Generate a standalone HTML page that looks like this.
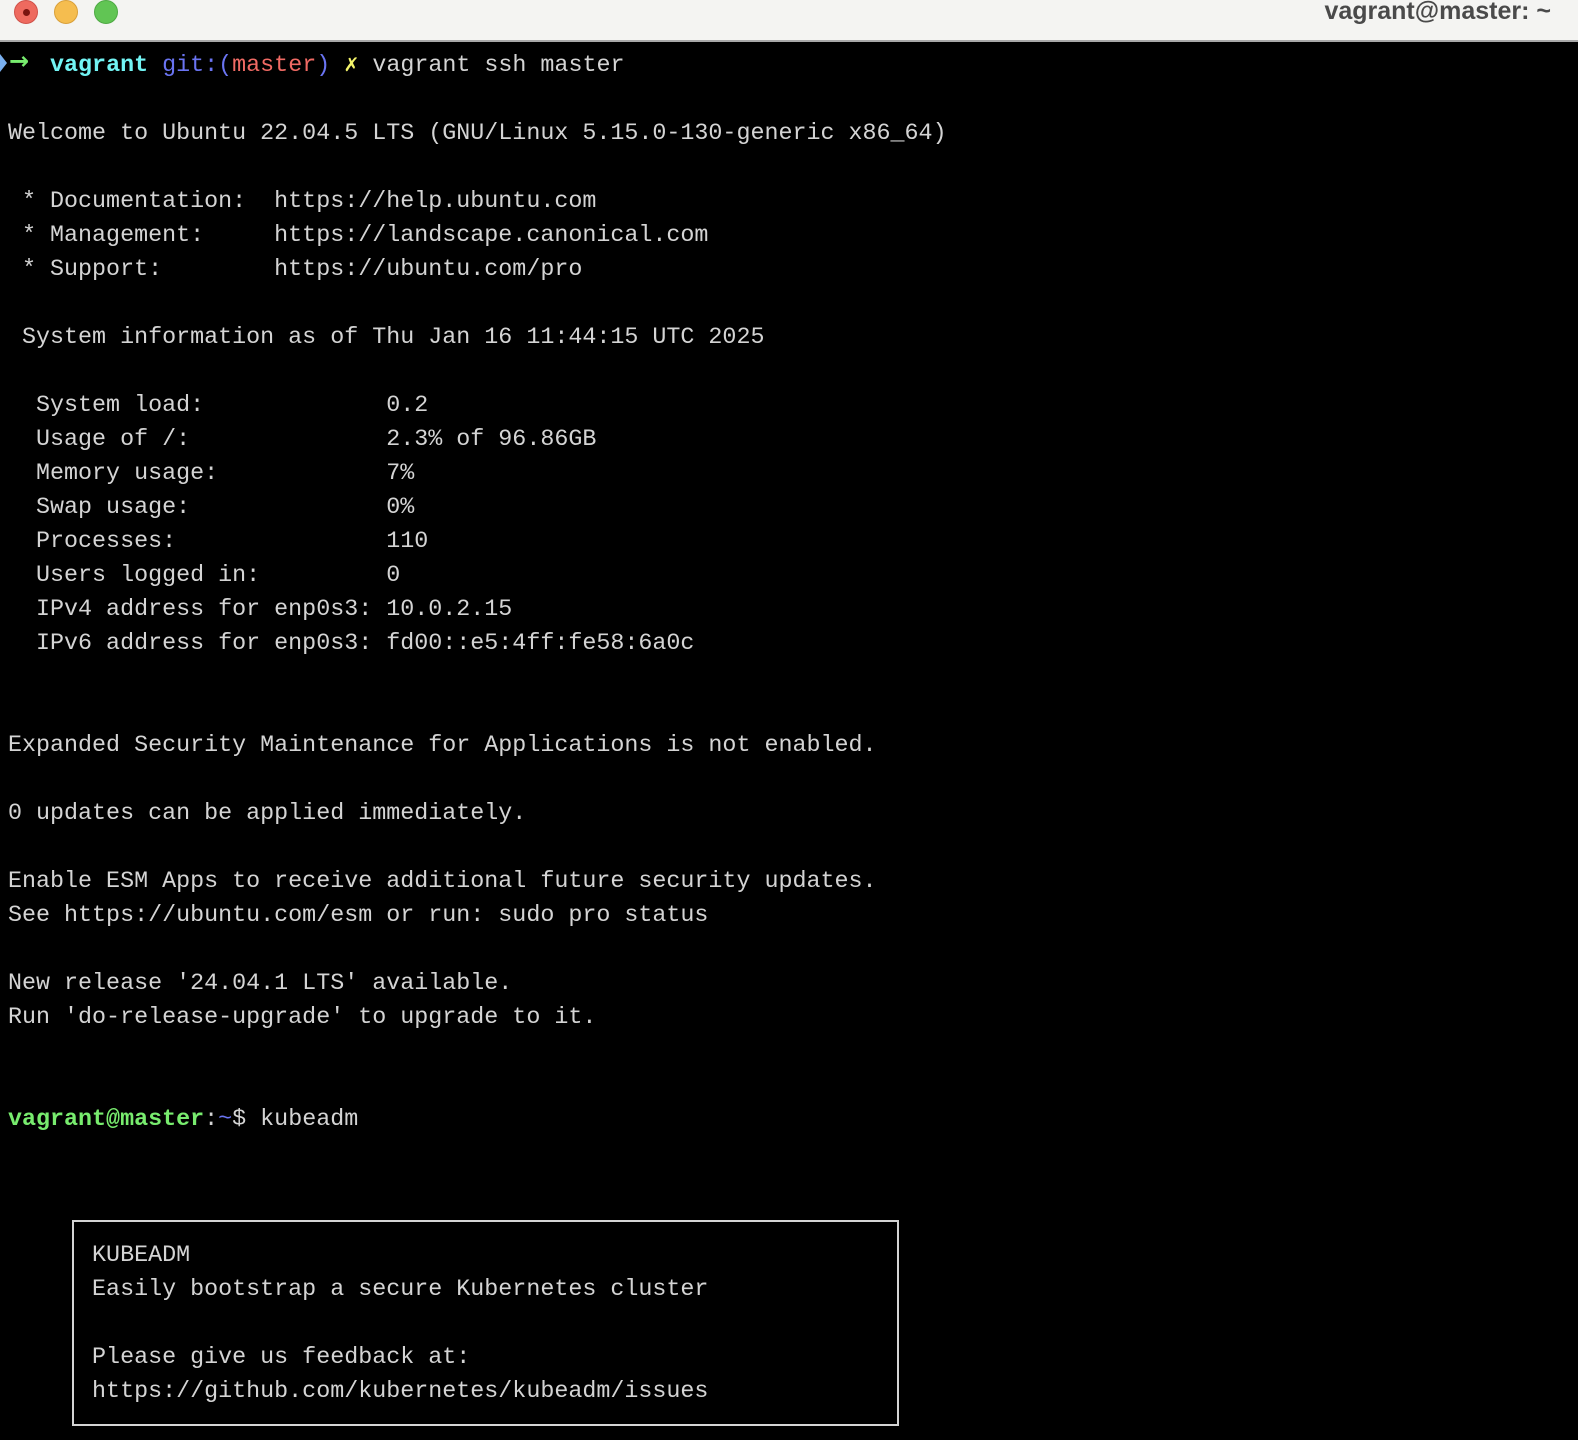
<!DOCTYPE html>
<html><head><meta charset="utf-8"><style>
html,body{margin:0;padding:0;background:#000;width:1578px;height:1440px;overflow:hidden}
.bar{position:absolute;left:0;top:0;width:1578px;height:40px;background:#f4f4f2;border-bottom:2px solid #a8a8a8}
.dot{position:absolute;top:0px;width:22px;height:22px;border-radius:50%}
.title{position:absolute;right:27px;top:-3px;font:bold 25px "Liberation Sans",sans-serif;color:#4a4a4a}
pre{position:absolute;left:8px;top:49px;margin:0;font:23.35px/34.0px "Liberation Mono",monospace;color:#d4d4d4;white-space:pre}
.c{color:#72f4f4;font-weight:bold}.b{color:#6a74f2}.r{color:#f06a64}.y{color:#f4f46a;font-weight:bold}.g{color:#78ec6e;font-weight:bold}
.box{position:absolute;left:72px;top:1220px;width:823px;height:202px;border:2px solid #d4d4d4}
</style></head><body>
<div class="bar">
<div class="dot" style="left:14px;background:#ee6a5f;border:1px solid #d0524a"><div style="position:absolute;left:8px;top:8px;width:7px;height:7px;border-radius:50%;background:#7a1410"></div></div>
<div class="dot" style="left:54px;background:#f5bd4f;border:1px solid #d9a03a"></div>
<div class="dot" style="left:94px;background:#61c554;border:1px solid #4ea944"></div>
<div class="title">vagrant@master: ~</div>
</div>
<div style="position:absolute;left:0;top:54px;width:0;height:0;border-top:9px solid transparent;border-bottom:9px solid transparent;border-left:7px solid #7ab0f0"></div>
<div style="position:absolute;left:9px;top:47px;font:bold 24px 'DejaVu Sans',sans-serif;color:#78ec6e">→</div>
<div class="box"></div>
<pre>   <span class="c">vagrant</span> <span class="b">git:(</span><span class="r">master</span><span class="b">)</span> <span class="y">✗</span> vagrant ssh master

Welcome to Ubuntu 22.04.5 LTS (GNU/Linux 5.15.0-130-generic x86_64)

 * Documentation:  https://help.ubuntu.com
 * Management:     https://landscape.canonical.com
 * Support:        https://ubuntu.com/pro

 System information as of Thu Jan 16 11:44:15 UTC 2025

  System load:             0.2
  Usage of /:              2.3% of 96.86GB
  Memory usage:            7%
  Swap usage:              0%
  Processes:               110
  Users logged in:         0
  IPv4 address for enp0s3: 10.0.2.15
  IPv6 address for enp0s3: fd00::e5:4ff:fe58:6a0c


Expanded Security Maintenance for Applications is not enabled.

0 updates can be applied immediately.

Enable ESM Apps to receive additional future security updates.
See https://ubuntu.com/esm or run: sudo pro status

New release '24.04.1 LTS' available.
Run 'do-release-upgrade' to upgrade to it.


<span class="g">vagrant@master</span>:<span class="b">~</span>$ kubeadm



      KUBEADM
      Easily bootstrap a secure Kubernetes cluster

      Please give us feedback at:
      https://github.com/kubernetes/kubeadm/issues</pre>
</body></html>
